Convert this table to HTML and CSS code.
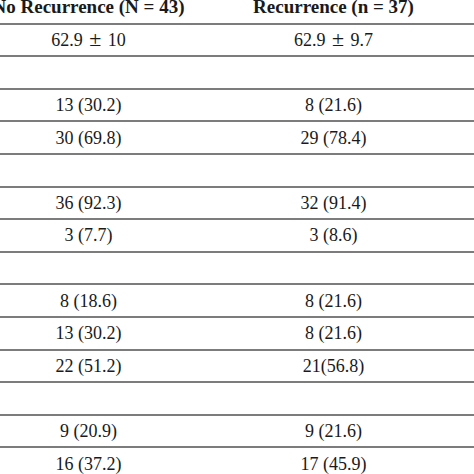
FILE: index.html
```html
<!DOCTYPE html>
<html lang="en">
<head>
<meta charset="utf-8">
<title>Recurrence table</title>
<link rel="stylesheet" href="styles.css">
</head>
<body>
<div class="table">
  <div class="row head"><div class="cell">No Recurrence (N = 43)</div><div class="cell">Recurrence (n = 37)</div><div class="cell"></div></div>
  <div class="row"><div class="cell">62.9 <span class="pm">±</span> 10</div><div class="cell">62.9 <span class="pm">±</span> 9.7</div><div class="cell"></div></div>
  <div class="row"><div class="cell"></div><div class="cell"></div><div class="cell"></div></div>
  <div class="row"><div class="cell">13 (30.2)</div><div class="cell">8 (21.6)</div><div class="cell"></div></div>
  <div class="row"><div class="cell">30 (69.8)</div><div class="cell">29 (78.4)</div><div class="cell"></div></div>
  <div class="row"><div class="cell"></div><div class="cell"></div><div class="cell"></div></div>
  <div class="row"><div class="cell">36 (92.3)</div><div class="cell">32 (91.4)</div><div class="cell"></div></div>
  <div class="row"><div class="cell">3 (7.7)</div><div class="cell">3 (8.6)</div><div class="cell"></div></div>
  <div class="row"><div class="cell"></div><div class="cell"></div><div class="cell"></div></div>
  <div class="row"><div class="cell">8 (18.6)</div><div class="cell">8 (21.6)</div><div class="cell"></div></div>
  <div class="row"><div class="cell">13 (30.2)</div><div class="cell">8 (21.6)</div><div class="cell"></div></div>
  <div class="row"><div class="cell">22 (51.2)</div><div class="cell">21(56.8)</div><div class="cell"></div></div>
  <div class="row"><div class="cell"></div><div class="cell"></div><div class="cell"></div></div>
  <div class="row"><div class="cell">9 (20.9)</div><div class="cell">9 (21.6)</div><div class="cell"></div></div>
  <div class="row"><div class="cell">16 (37.2)</div><div class="cell">17 (45.9)</div><div class="cell"></div></div>
</div>
</body>
</html>
```

FILE: styles.css
```css
html, body {
  margin: 0;
  padding: 0;
  background: #ffffff;
  overflow: hidden;
}

.table {
  margin-top: -8px;
  margin-left: -34px;
  width: 560px;
  font-family: "Liberation Serif", "Times New Roman", serif;
  font-size: 18px;
  color: #1a1a1a;
}

.row {
  display: grid;
  grid-template-columns: 245px 245px 1fr;
  align-items: center;
  height: 32.6px;
  box-sizing: border-box;
  border-bottom: 2px solid #7c7c7c;
}

.cell {
  text-align: center;
  white-space: nowrap;
  line-height: 20px;
}

.pm {
  font-size: 22px;
  line-height: 18px;
  margin: 0 2px;
}

.head .cell {
  font-weight: bold;
  font-size: 19px;
}
```
